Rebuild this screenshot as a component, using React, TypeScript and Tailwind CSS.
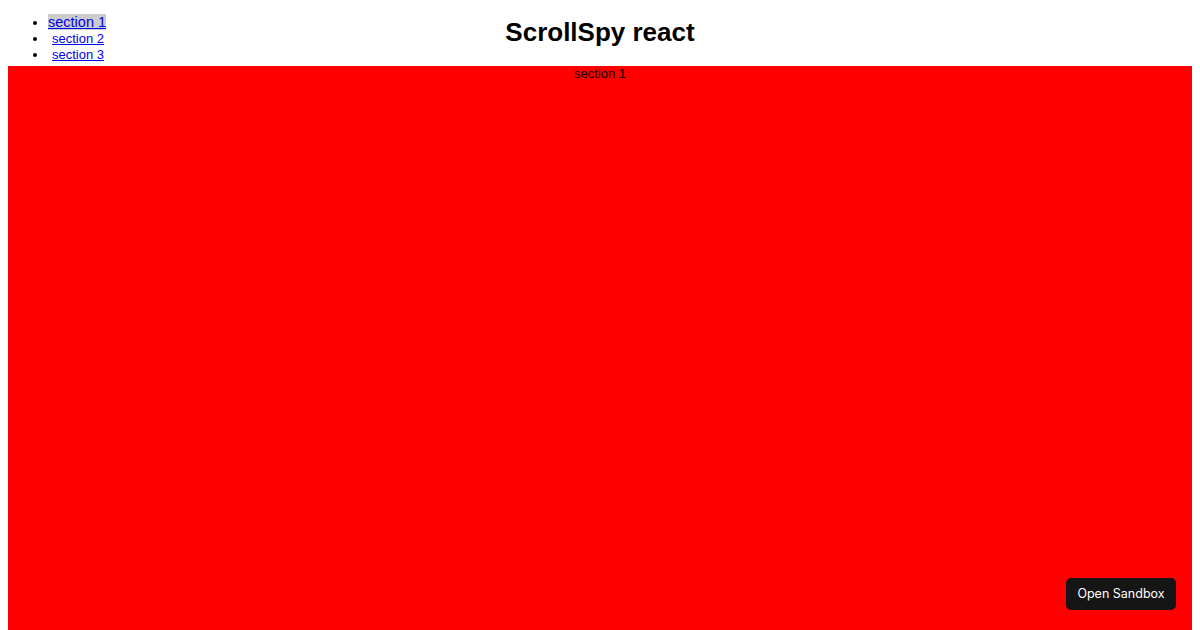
export default function App() {
  return (
    <div className="min-h-[630px] bg-white p-2 text-black" style={{ fontFamily: '"Liberation Sans", Arial, sans-serif' }}>
      <header className="relative h-[58px] pt-[9px]">
        <ul className="absolute left-0 top-[5px] list-disc pl-10 m-0">
          <li className="text-[14.5px] leading-[18px]">
            <a href="#section-1" className="bg-[#cccccc] text-[#0000ee] underline">section 1</a>
          </li>
          <li className="text-[13px] leading-[16px]">
            <a href="#section-2" className="ml-1 text-[#0000ee] underline">section 2</a>
          </li>
          <li className="text-[13px] leading-[16px]">
            <a href="#section-3" className="ml-1 text-[#0000ee] underline">section 3</a>
          </li>
        </ul>
        <h1 className="text-center text-[26px] font-bold leading-[30px]">ScrollSpy react</h1>
      </header>
      <main className="h-[564px] overflow-hidden">
        <section id="section-1" className="h-[600px] bg-[#ff0000] text-center text-[13px] leading-[15px]">
          section 1
        </section>
      </main>
      <button
        className="fixed bottom-[20px] right-[24px] h-[32px] w-[110px] rounded-[5px] bg-[#151515] text-[12.5px] text-white"
        style={{ fontFamily: 'Inter, "Liberation Sans", sans-serif' }}
      >
        Open Sandbox
      </button>
    </div>
  );
}
